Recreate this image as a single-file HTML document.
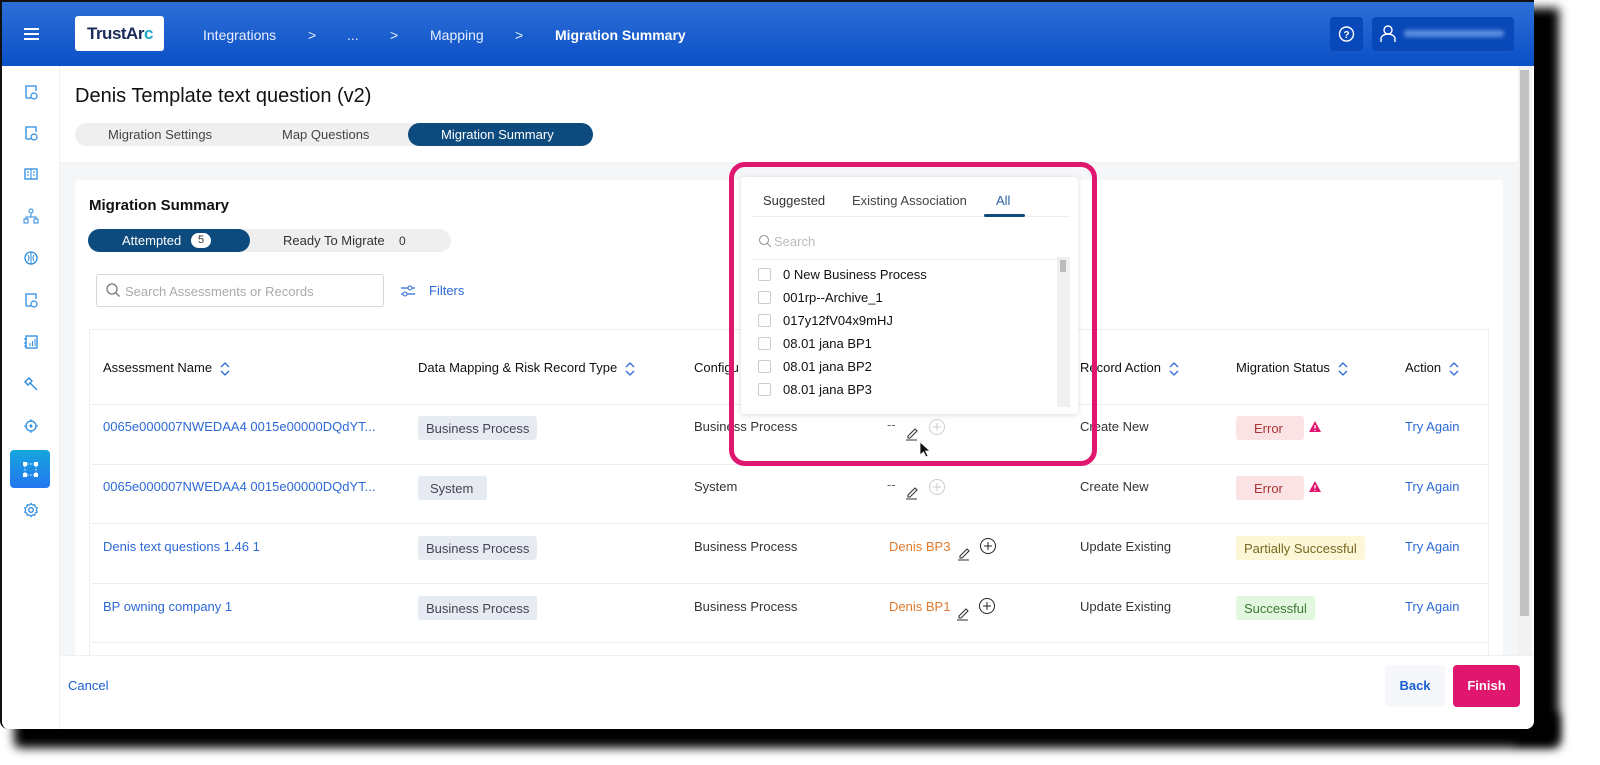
<!DOCTYPE html>
<html><head><meta charset="utf-8"><style>
*{box-sizing:border-box;margin:0;padding:0}
body{width:1600px;height:765px;background:#fff;font-family:"Liberation Sans",sans-serif;position:relative;overflow:hidden;color:#222}
.abs{position:absolute}
.shadowb{left:14px;top:712px;width:1545px;height:36px;background:#000;filter:blur(5px);border-radius:6px}
.shadowr{left:1515px;top:8px;width:44px;height:735px;background:#000;filter:blur(5px)}
.win{left:0;top:0;width:1534px;height:729px;background:#fff;border-left:2px solid #111;border-top:2px solid #111;border-radius:0 0 8px 8px;overflow:hidden}
.hdr{left:0;top:0;width:1534px;height:64px;background:linear-gradient(#2e6fd8,#0a4fc6)}
.hdr span{position:absolute;top:25px;color:#e8eefc;font-size:14px}
.side{left:0;top:64px;width:58px;height:665px;background:#fff;border-right:1px solid #eef0f3}
.ico{position:absolute;left:21px;width:16px;height:16px}
.td{position:absolute;font-size:13px;color:#333}
.lnk{color:#2d6ad6}
.tag{position:absolute;height:24px;background:#e6ebf2;border-radius:3px;font-size:13px;color:#445;padding:5px 8px}
.hd{position:absolute;top:358px;font-size:13px;color:#111}
.row{position:absolute;left:89px;width:1398px;height:1px;background:#eceef1}
.sort{display:inline-block;vertical-align:middle;margin-left:8px}
.cb{position:absolute;left:756px;width:13px;height:13px;border:1px solid #ccc;border-radius:2px;background:#fff}
.it{position:absolute;left:781px;font-size:13px;color:#111}
</style></head><body>
<div class="abs shadowb"></div><div class="abs shadowr"></div>
<div class="abs win">
 <div class="abs hdr">
  <div class="abs" style="left:22px;top:26px;width:15px;height:2px;background:#fff;box-shadow:0 5px 0 #fff,0 10px 0 #fff"></div>
  <div class="abs" style="left:73px;top:14px;width:89px;height:35px;background:#fff;border-radius:3px;font-size:17px;font-weight:bold;color:#1b2b5a;padding:8px 0 0 12px;letter-spacing:-0.5px">TrustA<span style="position:static;color:#1b2b5a;font-size:17px">r</span><span style="position:static;color:#1aa7c8;font-size:17px">c</span></div>
  <span style="left:201px">Integrations</span><span style="left:306px">&gt;</span><span style="left:345px">...</span><span style="left:388px">&gt;</span><span style="left:428px">Mapping</span><span style="left:513px">&gt;</span><span style="left:553px;color:#fff;font-weight:bold">Migration Summary</span>
  <div class="abs" style="left:1328px;top:15px;width:33px;height:34px;background:#0848b8;border-radius:4px"><svg width="33" height="34"><circle cx="16.5" cy="17" r="7" fill="none" stroke="#fff" stroke-width="1.4"/><text x="16.5" y="21" fill="#fff" font-size="10" text-anchor="middle" font-family="Liberation Sans" font-weight="bold">?</text></svg></div>
  <div class="abs" style="left:1370px;top:15px;width:142px;height:34px;background:#0848b8;border-radius:4px"><svg width="40" height="34"><circle cx="16" cy="13" r="4" fill="none" stroke="#fff" stroke-width="1.4"/><path d="M9 25v-3a7 5 0 0 1 14 0v3" fill="none" stroke="#fff" stroke-width="1.4"/></svg><div class="abs" style="left:32px;top:13px;width:100px;height:7px;background:#5f8fe0;filter:blur(2px);border-radius:3px"></div></div>
 </div>
 <div class="abs side">
  <svg class="ico" style="top:18px" viewBox="0 0 16 16"><path d="M3 14V2h10v5M3 14h5" fill="none" stroke="#2a8be0" stroke-width="1.3"/><circle cx="11" cy="12" r="3" fill="none" stroke="#2a8be0" stroke-width="1.2"/></svg>
  <svg class="ico" style="top:59px" viewBox="0 0 16 16"><path d="M3 14V2h10v5M3 14h5" fill="none" stroke="#2a8be0" stroke-width="1.3"/><circle cx="11" cy="12" r="3" fill="none" stroke="#2a8be0" stroke-width="1.2"/></svg>
  <svg class="ico" style="top:100px" viewBox="0 0 16 16"><rect x="2" y="3" width="12" height="10" fill="none" stroke="#2a8be0" stroke-width="1.3"/><path d="M8 3v10M4 6h2M4 9h2M10 6h2M10 9h2" stroke="#2a8be0"/></svg>
  <svg class="ico" style="top:142px" viewBox="0 0 16 16"><circle cx="8" cy="3" r="2" fill="none" stroke="#2a8be0"/><rect x="1" y="11" width="4" height="4" fill="none" stroke="#2a8be0"/><rect x="11" y="11" width="4" height="4" fill="none" stroke="#2a8be0"/><path d="M8 5v4M3 11V9h10v2" fill="none" stroke="#2a8be0"/></svg>
  <svg class="ico" style="top:184px" viewBox="0 0 16 16"><circle cx="8" cy="8" r="6" fill="none" stroke="#2a8be0" stroke-width="1.3"/><path d="M8 2v12M5 5q2 3 0 6M11 5q-2 3 0 6" fill="none" stroke="#2a8be0"/></svg>
  <svg class="ico" style="top:226px" viewBox="0 0 16 16"><path d="M3 14V2h10v5M3 14h5" fill="none" stroke="#2a8be0" stroke-width="1.3"/><circle cx="11" cy="12" r="3" fill="none" stroke="#2a8be0" stroke-width="1.2"/></svg>
  <svg class="ico" style="top:268px" viewBox="0 0 16 16"><rect x="3" y="2" width="11" height="12" fill="none" stroke="#2a8be0" stroke-width="1.3"/><path d="M7 12V9M9.5 12V7M12 12V5M1 5h3M1 9h3M1 12h3" stroke="#2a8be0"/></svg>
  <svg class="ico" style="top:310px" viewBox="0 0 16 16"><path d="M2 6l4-4 3 3-4 4zM7 7l7 7" fill="none" stroke="#2a8be0" stroke-width="1.4"/></svg>
  <svg class="ico" style="top:352px" viewBox="0 0 16 16"><circle cx="8" cy="8" r="5" fill="none" stroke="#2a8be0" stroke-width="1.3"/><path d="M8 1v3M8 12v3M1 8h3M12 8h3" stroke="#2a8be0"/><circle cx="8" cy="8" r="1.5" fill="#2a8be0"/></svg>
  <div class="abs" style="left:8px;top:384px;width:40px;height:38px;border-radius:4px;background:linear-gradient(#15a6dd,#2476f0)"><svg width="40" height="38"><rect x="13" y="12" width="4" height="4" fill="#fff"/><rect x="24" y="12" width="4" height="4" fill="#fff"/><rect x="13" y="23" width="4" height="4" fill="#fff"/><rect x="24" y="23" width="4" height="4" fill="#fff"/><path d="M15 16v7M26 16v7M17 14h7M17 25h7" stroke="#fff" stroke-dasharray="1.5 1.5"/></svg></div>
  <svg class="ico" style="top:436px" viewBox="0 0 16 16"><circle cx="8" cy="8" r="2.3" fill="none" stroke="#2a8be0" stroke-width="1.3"/><path d="M8 1.5l1.5 1.6 2.2-.4.5 2.2 2 1L13.3 8l.9 2.1-2 1-.5 2.2-2.2-.4L8 14.5l-1.5-1.6-2.2.4-.5-2.2-2-1L2.7 8l-.9-2.1 2-1 .5-2.2 2.2.4z" fill="none" stroke="#2a8be0" stroke-width="1.2"/></svg>
 </div>
 <!-- content -->
 <div class="abs" style="left:58px;top:64px;width:1460px;height:97px;background:#fff;border-bottom:1px solid #eef0f3"></div>
 <div class="abs" style="left:58px;top:161px;width:1460px;height:492px;background:#f5f6f8"></div>
 <div class="abs" style="left:73px;top:83px;font-size:20px;color:#111">Denis Template text question (v2)</div>
 <div class="abs" style="left:73px;top:121px;width:518px;height:23px;background:#efefef;border-radius:12px"></div>
 <div class="abs" style="left:406px;top:121px;width:185px;height:23px;background:#0d4a7d;border-radius:12px"></div>
 <div class="abs" style="left:106px;top:125px;font-size:13px;color:#444">Migration Settings</div>
 <div class="abs" style="left:280px;top:125px;font-size:13px;color:#444">Map Questions</div>
 <div class="abs" style="left:439px;top:125px;font-size:13px;color:#fff">Migration Summary</div>
 <div class="abs" style="left:73px;top:178px;width:1428px;height:480px;background:#fff;border-radius:4px"></div>
 <div class="abs" style="left:87px;top:195px;font-size:15px;font-weight:bold;color:#111">Migration Summary</div>
 <div class="abs" style="left:86px;top:227px;width:363px;height:23px;background:#efefef;border-radius:12px"></div>
 <div class="abs" style="left:86px;top:227px;width:162px;height:23px;background:#0d4a7d;border-radius:12px"></div>
 <div class="abs" style="left:120px;top:231px;font-size:13px;color:#fff">Attempted</div>
 <div class="abs" style="left:189px;top:231px;width:20px;height:15px;background:#fff;border-radius:8px;font-size:11px;text-align:center;color:#333;padding-top:1px">5</div>
 <div class="abs" style="left:281px;top:231px;font-size:13px;color:#333">Ready To Migrate</div>
 <div class="abs" style="left:397px;top:232px;font-size:12px;color:#333">0</div>
 <div class="abs" style="left:94px;top:272px;width:288px;height:33px;border:1px solid #d4d7dc;border-radius:3px"></div>
 <svg class="abs" style="left:103px;top:280px" width="16" height="16"><circle cx="7" cy="7" r="5" fill="none" stroke="#777" stroke-width="1.3"/><path d="M10.5 10.5l4 4" stroke="#777" stroke-width="1.3"/></svg>
 <div class="abs" style="left:123px;top:282px;font-size:13px;color:#aaa">Search Assessments or Records</div>
 <svg class="abs" style="left:398px;top:281px" width="16" height="16"><path d="M1 5h14M1 11h14" stroke="#2d6ad6" stroke-width="1.2"/><circle cx="10" cy="5" r="2" fill="#fff" stroke="#2d6ad6"/><circle cx="5" cy="11" r="2" fill="#fff" stroke="#2d6ad6"/></svg>
 <div class="abs lnk" style="left:427px;top:281px;font-size:13px">Filters</div>
 <div class="abs" style="left:87px;top:327px;width:1400px;height:330px;border:1px solid #eceef1;border-bottom:none"></div>
 <div class="hd" style="left:101px">Assessment Name<svg class="sort" width="10" height="16"><path d="M1 6l4-4 4 4M1 10l4 4 4-4" fill="none" stroke="#2d6ad6" stroke-width="1.3"/></svg></div>
 <div class="hd" style="left:416px">Data Mapping &amp; Risk Record Type<svg class="sort" width="10" height="16"><path d="M1 6l4-4 4 4M1 10l4 4 4-4" fill="none" stroke="#2d6ad6" stroke-width="1.3"/></svg></div>
 <div class="hd" style="left:692px">Configu</div>
 <div class="hd" style="left:1078px">Record Action<svg class="sort" width="10" height="16"><path d="M1 6l4-4 4 4M1 10l4 4 4-4" fill="none" stroke="#2d6ad6" stroke-width="1.3"/></svg></div>
 <div class="hd" style="left:1234px">Migration Status<svg class="sort" width="10" height="16"><path d="M1 6l4-4 4 4M1 10l4 4 4-4" fill="none" stroke="#2d6ad6" stroke-width="1.3"/></svg></div>
 <div class="hd" style="left:1403px">Action<svg class="sort" width="10" height="16"><path d="M1 6l4-4 4 4M1 10l4 4 4-4" fill="none" stroke="#2d6ad6" stroke-width="1.3"/></svg></div>
 <div class="row" style="top:402px"></div><div class="row" style="top:462px"></div><div class="row" style="top:521px"></div><div class="row" style="top:581px"></div><div class="row" style="top:640px"></div>
 <!-- row1 -->
 <div class="td lnk" style="left:101px;top:417px">0065e000007NWEDAA4 0015e00000DQdYT...</div>
 <div class="tag" style="left:416px;top:414px">Business Process</div>
 <div class="td" style="left:692px;top:417px">Business Process</div>
 <div class="td" style="left:1078px;top:417px">Create New</div>
 <div class="tag" style="left:1234px;top:414px;background:#fbe3e5;color:#a33;padding-left:18px;width:68px">Error</div>
 <svg class="abs" style="left:1306px;top:418px" width="14" height="13"><path d="M7 1L13 12H1z" fill="#e0176f"/><path d="M7 5v3.5M7 10v1" stroke="#fff" stroke-width="1.3"/></svg>
 <div class="td lnk" style="left:1403px;top:417px">Try Again</div>
 <!-- row2 -->
 <div class="td lnk" style="left:101px;top:477px">0065e000007NWEDAA4 0015e00000DQdYT...</div>
 <div class="tag" style="left:416px;top:474px;width:69px;padding-left:12px">System</div>
 <div class="td" style="left:692px;top:477px">System</div>
 <div class="td" style="left:885px;top:475px;color:#666">--</div>
 <svg class="abs" style="left:903px;top:482px" width="14" height="16"><path d="M3 11l7-7 2 2-7 7H3zM1 15h11" fill="none" stroke="#333" stroke-width="1.1"/></svg>
 <svg class="abs" style="left:926px;top:476px" width="18" height="18"><circle cx="9" cy="9" r="7.5" fill="none" stroke="#ccc"/><path d="M9 5v8M5 9h8" stroke="#ccc"/></svg>
 <div class="td" style="left:1078px;top:477px">Create New</div>
 <div class="tag" style="left:1234px;top:474px;background:#fbe3e5;color:#a33;padding-left:18px;width:68px">Error</div>
 <svg class="abs" style="left:1306px;top:478px" width="14" height="13"><path d="M7 1L13 12H1z" fill="#e0176f"/><path d="M7 5v3.5M7 10v1" stroke="#fff" stroke-width="1.3"/></svg>
 <div class="td lnk" style="left:1403px;top:477px">Try Again</div>
 <!-- row3 -->
 <div class="td lnk" style="left:101px;top:537px">Denis text questions 1.46 1</div>
 <div class="tag" style="left:416px;top:534px">Business Process</div>
 <div class="td" style="left:692px;top:537px">Business Process</div>
 <div class="td" style="left:887px;top:537px;color:#e07b2e">Denis BP3</div>
 <svg class="abs" style="left:955px;top:543px" width="14" height="16"><path d="M3 11l7-7 2 2-7 7H3zM1 15h11" fill="none" stroke="#333" stroke-width="1.1"/></svg>
 <svg class="abs" style="left:977px;top:535px" width="18" height="18"><circle cx="9" cy="9" r="7.5" fill="none" stroke="#222"/><path d="M9 5v8M5 9h8" stroke="#222"/></svg>
 <div class="td" style="left:1078px;top:537px">Update Existing</div>
 <div class="tag" style="left:1234px;top:534px;background:#fdf7d8;color:#776a20">Partially Successful</div>
 <div class="td lnk" style="left:1403px;top:537px">Try Again</div>
 <!-- row4 -->
 <div class="td lnk" style="left:101px;top:597px">BP owning company 1</div>
 <div class="tag" style="left:416px;top:594px">Business Process</div>
 <div class="td" style="left:692px;top:597px">Business Process</div>
 <div class="td" style="left:887px;top:597px;color:#e07b2e">Denis BP1</div>
 <svg class="abs" style="left:954px;top:603px" width="14" height="16"><path d="M3 11l7-7 2 2-7 7H3zM1 15h11" fill="none" stroke="#333" stroke-width="1.1"/></svg>
 <svg class="abs" style="left:976px;top:595px" width="18" height="18"><circle cx="9" cy="9" r="7.5" fill="none" stroke="#222"/><path d="M9 5v8M5 9h8" stroke="#222"/></svg>
 <div class="td" style="left:1078px;top:597px">Update Existing</div>
 <div class="tag" style="left:1234px;top:594px;background:#e3f6df;color:#3d7a35">Successful</div>
 <div class="td lnk" style="left:1403px;top:597px">Try Again</div>
 <!-- scrollbar -->
 <div class="abs" style="left:1516px;top:64px;width:14px;height:590px;background:#f2f2f2"></div>
 <div class="abs" style="left:1518px;top:68px;width:9px;height:546px;background:#c1c1c1"></div>
 <!-- footer -->
 <div class="abs" style="left:58px;top:653px;width:1476px;height:76px;background:#fff;border-top:1px solid #eef0f3"></div>
 <div class="abs" style="left:66px;top:676px;font-size:13px;color:#1a5fd0">Cancel</div>
 <div class="abs" style="left:1383px;top:663px;width:60px;height:42px;background:#f5f7fb;border-radius:4px;font-size:13px;font-weight:bold;color:#1a5fd0;text-align:center;padding-top:13px">Back</div>
 <div class="abs" style="left:1451px;top:663px;width:67px;height:42px;background:#e0176f;border-radius:4px;font-size:13px;font-weight:bold;color:#fff;text-align:center;padding-top:13px">Finish</div>
 <!-- popover -->
 <div class="abs" style="left:739px;top:175px;width:337px;height:237px;background:#fff;border-radius:4px;box-shadow:0 1px 6px rgba(0,0,0,.15)"></div>
 <div class="abs" style="left:761px;top:191px;font-size:13px;color:#333">Suggested</div>
 <div class="abs" style="left:850px;top:191px;font-size:13px;color:#444">Existing Association</div>
 <div class="abs" style="left:994px;top:191px;font-size:13px;color:#2a5ea8">All</div>
 <div class="abs" style="left:750px;top:214px;width:318px;height:1px;background:#eee"></div>
 <div class="abs" style="left:982px;top:212px;width:41px;height:3px;background:#0d4a7d;border-radius:2px"></div>
 <svg class="abs" style="left:756px;top:232px" width="14" height="14"><circle cx="6" cy="6" r="4.5" fill="none" stroke="#999" stroke-width="1.1"/><path d="M9 9l4 4" stroke="#999" stroke-width="1.1"/></svg>
 <div class="abs" style="left:772px;top:232px;font-size:13px;color:#bbb">Search</div>
 <div class="abs" style="left:750px;top:257px;width:318px;height:1px;background:#f0f0f0"></div>
 <div class="abs" style="left:1055px;top:255px;width:13px;height:150px;background:#f0f0f0"></div>
 <div class="abs" style="left:1058px;top:258px;width:6px;height:12px;background:#bbb"></div>
 <div class="cb" style="top:266px"></div><div class="it" style="top:265px">0 New Business Process</div>
 <div class="cb" style="top:289px"></div><div class="it" style="top:288px">001rp--Archive_1</div>
 <div class="cb" style="top:312px"></div><div class="it" style="top:311px">017y12fV04x9mHJ</div>
 <div class="cb" style="top:335px"></div><div class="it" style="top:334px">08.01 jana BP1</div>
 <div class="cb" style="top:358px"></div><div class="it" style="top:357px">08.01 jana BP2</div>
 <div class="cb" style="top:381px"></div><div class="it" style="top:380px">08.01 jana BP3</div>
 <div class="abs" style="left:739px;top:404px;width:315px;height:7px;background:#fff"></div>
 <!-- row1 record col under popover -->
 <div class="td" style="left:885px;top:415px;color:#666">--</div>
 <svg class="abs" style="left:903px;top:423px" width="14" height="16"><path d="M3 11l7-7 2 2-7 7H3zM1 15h11" fill="none" stroke="#333" stroke-width="1.1"/></svg>
 <svg class="abs" style="left:926px;top:416px" width="18" height="18"><circle cx="9" cy="9" r="7.5" fill="none" stroke="#ccc"/><path d="M9 5v8M5 9h8" stroke="#ccc"/></svg>
 <svg class="abs" style="left:917px;top:439px" width="12" height="18"><path d="M1 1v13l3.5-3 2.5 5 2-1-2.5-5H11z" fill="#111" stroke="#fff" stroke-width="0.8"/></svg>
 <!-- highlight -->
 <div class="abs" style="left:727px;top:160px;width:368px;height:304px;border:5px solid #e0176f;border-radius:16px"></div>
</div>
</body></html>
